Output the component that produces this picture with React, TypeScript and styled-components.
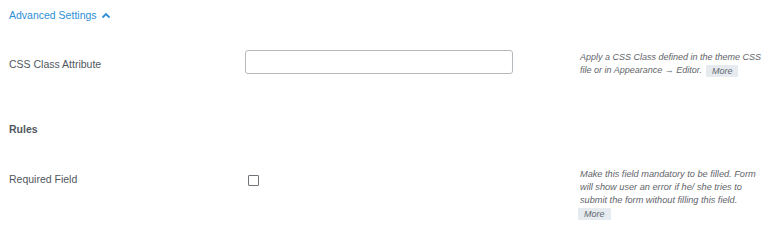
import React from "react";
import styled, { createGlobalStyle } from "styled-components";

const Global = createGlobalStyle`
	body {
		margin: 0;
		background: #fff;
		font-family: "Liberation Sans", Arial, sans-serif;
		color: #3c434a;
	}
`;

const Page = styled.div`
	width: 768px;
	height: 231px;
	padding: 0 0 0 9px;
	box-sizing: border-box;
	overflow: hidden;
`;

const Toggle = styled.div`
	display: flex;
	align-items: center;
	gap: 4px;
	height: 30px;
	color: #2c8fd6;
	font-size: 10.5px;
	font-weight: 500;

	& > svg {
		margin-top: 1px;
	}
`;

const Row = styled.div<{ $top: number; $height: number }>`
	display: grid;
	grid-template-columns: 236px 336px 1fr;
	align-items: start;
	margin-top: ${(p) => p.$top}px;
	height: ${(p) => p.$height}px;
`;

const Label = styled.div<{ $pad: number }>`
	font-size: 10.5px;
	color: #50575e;
	padding-top: ${(p) => p.$pad}px;
`;

const Section = styled.div`
	margin-top: 33px;
	font-size: 10.5px;
	font-weight: bold;
	color: #50575e;
`;

const TextInput = styled.input`
	width: 268px;
	height: 24px;
	box-sizing: border-box;
	border: 1px solid #b4b9be;
	border-radius: 3px;
	background: #fff;
	margin: 0;
`;

const Check = styled.span`
	display: block;
	width: 11px;
	height: 11px;
	box-sizing: border-box;
	border: 1px solid #6e7378;
	border-radius: 1px;
	margin: 8px 0 0 3px;
`;

const Help = styled.div<{ $size: number }>`
	font-size: ${(p) => p.$size}px;
	font-style: italic;
	line-height: 13px;
	color: #5f646a;
	padding-top: 1px;
	margin-left: -1px;
`;

const More = styled.span`
	display: inline-block;
	vertical-align: middle;
	background: #e6ebf0;
	color: #646970;
	font-size: 9px;
	line-height: 12px;
	padding: 0 6px;
	margin-left: 4px;
	border-radius: 1px;
`;

const MoreBlock = styled(More)`
	margin: 1px 0 0 -2px;
`;

const Chevron = () => (
	<svg width="10" height="7" viewBox="0 0 10 7">
		<path d="M1.5 5.5 L5 2 L8.5 5.5" fill="none" stroke="#2c8fd6" strokeWidth="1.8" />
	</svg>
);

const App = () => (
	<Page>
		<Global />
		<Toggle>
			Advanced Settings <Chevron />
		</Toggle>
		<Row $top={20} $height={40}>
			<Label $pad={8}>CSS Class Attribute</Label>
			<div>
				<TextInput type="text" />
			</div>
			<Help $size={9}>
				Apply a CSS Class defined in the theme CSS file or in Appearance → Editor.
				<More>More</More>
			</Help>
		</Row>
		<Section>Rules</Section>
		<Row $top={32} $height={60}>
			<Label $pad={6}>Required Field</Label>
			<div>
				<Check />
			</div>
			<Help $size={9.2}>
				Make this field mandatory to be filled. Form will show user an error if he/ she tries to
				submit the form without filling this field.
				<br />
				<MoreBlock>More</MoreBlock>
			</Help>
		</Row>
	</Page>
);

export default App;
